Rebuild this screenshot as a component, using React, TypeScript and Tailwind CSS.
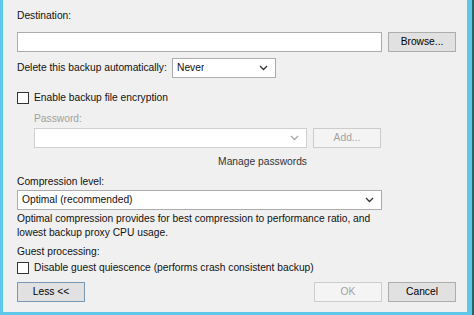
import type { ReactNode } from 'react';

const font = { fontFamily: '"Liberation Sans", Arial, sans-serif' };

function Chevron({ muted = false }: { muted?: boolean }) {
  return (
    <svg width="9" height="6" viewBox="0 0 9 6" className="shrink-0">
      <path d="M1 1 L4.5 4.5 L8 1" fill="none" stroke={muted ? '#a8a8a8' : '#333'} strokeWidth="1.3" />
    </svg>
  );
}

function Select({ value, className, muted = false }: { value?: string; className?: string; muted?: boolean }) {
  return (
    <div
      className={`flex h-[20px] items-center justify-between border bg-white pl-[4px] pr-[7px] ${
        muted ? 'border-[#cfcfcf]' : 'border-[#acacac]'
      } ${className ?? ''}`}
    >
      <span className="truncate">{value}</span>
      <Chevron muted={muted} />
    </div>
  );
}

function Button({
  children,
  className,
  disabled = false,
  primary = false,
}: {
  children: ReactNode;
  className?: string;
  disabled?: boolean;
  primary?: boolean;
}) {
  const tone = disabled
    ? 'border-[#cccccc] bg-[#f4f4f4] text-[#a2a2a2]'
    : primary
      ? 'border-[#7898b8] bg-[#e1e1e1] text-black'
      : 'border-[#adadad] bg-[#e1e1e1] text-black';
  return (
    <div className={`flex h-[20px] items-center justify-center border ${tone} ${className ?? ''}`}>
      {children}
    </div>
  );
}

function Checkbox() {
  return <div className="h-[12px] w-[12px] shrink-0 border border-[#333] bg-white" />;
}

export default function App() {
  return (
    <div className="flex h-[315px] w-[474px] text-[10.25px] leading-[16px] text-[#111]" style={font}>
      <div className="flex flex-1 flex-col">
        <div className="flex flex-1">
          <div className="w-[3px] bg-[#5ec8ea]" />
          <div className="flex flex-1 flex-col bg-[#f0f0f0] pl-[14px] pr-[11px]">
            <div className="mt-[8px] h-[16px]">Destination:</div>

            <div className="mt-[8px] flex h-[20px] gap-[6px]">
              <div className="h-[20px] w-[365px] border border-[#acacac] bg-white" />
              <Button className="w-[68px]">Browse...</Button>
            </div>

            <div className="mt-[6px] flex h-[20px] items-center">
              <span className="w-[155px] whitespace-nowrap">Delete this backup automatically:</span>
              <Select value="Never" className="w-[104px]" />
            </div>

            <div className="mt-[12px] flex h-[16px] items-center gap-[5px]">
              <Checkbox />
              <span>Enable backup file encryption</span>
            </div>

            <div className="ml-[17px] mt-[5px] h-[16px] text-[#a0a0a0]">Password:</div>

            <div className="ml-[17px] mt-[1px] flex h-[20px] gap-[6px]">
              <Select className="w-[273px]" muted />
              <Button className="w-[68px]" disabled>
                Add...
              </Button>
            </div>

            <div className="mt-[6px] flex h-[16px] w-[290px] justify-end text-[#333]">Manage passwords</div>

            <div className="mt-[4px] h-[16px]">Compression level:</div>

            <Select value="Optimal (recommended)" className="w-[365px]" />

            <div className="mt-[2px] leading-[14px]">
              <div>Optimal compression provides for best compression to performance ratio, and</div>
              <div>lowest backup proxy CPU usage.</div>
            </div>

            <div className="mt-[4px] h-[16px]">Guest processing:</div>

            <div className="flex h-[16px] items-center gap-[5px]">
              <Checkbox />
              <span>Disable guest quiescence (performs crash consistent backup)</span>
            </div>

            <div className="mt-[6px] flex h-[20px] items-center">
              <Button className="w-[68px]" primary>
                Less &lt;&lt;
              </Button>
              <div className="flex-1" />
              <Button className="w-[68px]" disabled>
                OK
              </Button>
              <Button className="ml-[6px] w-[68px]">Cancel</Button>
            </div>
          </div>
          <div className="w-[5px] bg-[#5ec8ea]" />
        </div>
        <div className="h-[3px] bg-[#5ec8ea]" />
      </div>
      <div className="w-[3px] bg-[#2f6262]" />
    </div>
  );
}
